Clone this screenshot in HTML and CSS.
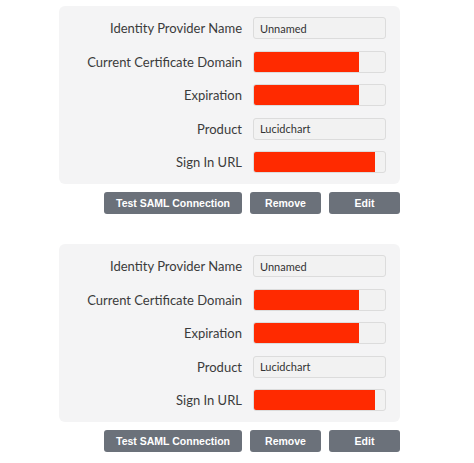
FILE: index.html
```html
<!DOCTYPE html>
<html>
<head>
<meta charset="utf-8">
<link rel="stylesheet" href="styles.css">
</head>
<body>
<div class="page">
  <section class="idp">
    <div class="panel">
      <div class="row"><span class="label">Identity Provider Name</span><div class="field"><span class="val">Unnamed</span></div></div>
      <div class="row"><span class="label">Current Certificate Domain</span><div class="field"><div class="redact" style="width:105px"></div></div></div>
      <div class="row"><span class="label">Expiration</span><div class="field"><div class="redact" style="width:105px"></div></div></div>
      <div class="row"><span class="label">Product</span><div class="field"><span class="val">Lucidchart</span></div></div>
      <div class="row"><span class="label">Sign In URL</span><div class="field"><div class="redact" style="width:121px"></div></div></div>
    </div>
    <div class="actions">
      <button class="btn btn-test">Test SAML Connection</button>
      <button class="btn btn-small">Remove</button>
      <button class="btn btn-small">Edit</button>
    </div>
  </section>
  <section class="idp">
    <div class="panel">
      <div class="row"><span class="label">Identity Provider Name</span><div class="field"><span class="val">Unnamed</span></div></div>
      <div class="row"><span class="label">Current Certificate Domain</span><div class="field"><div class="redact" style="width:105px"></div></div></div>
      <div class="row"><span class="label">Expiration</span><div class="field"><div class="redact" style="width:105px"></div></div></div>
      <div class="row"><span class="label">Product</span><div class="field"><span class="val">Lucidchart</span></div></div>
      <div class="row"><span class="label">Sign In URL</span><div class="field"><div class="redact" style="width:121px"></div></div></div>
    </div>
    <div class="actions">
      <button class="btn btn-test">Test SAML Connection</button>
      <button class="btn btn-small">Remove</button>
      <button class="btn btn-small">Edit</button>
    </div>
  </section>
</div>
</body>
</html>
```
FILE: styles.css
```css
html, body {
  margin: 0;
  padding: 0;
  background: #ffffff;
}
body {
  font-family: Lato, "Liberation Sans", sans-serif;
  color: #3a3a3a;
}
.page {
  width: 341px;
  margin-left: 59px;
  padding-top: 6px;
  display: flex;
  flex-direction: column;
  gap: 30px;
}
.idp {
  display: flex;
  flex-direction: column;
  gap: 8px;
}
.panel {
  background: #f4f4f5;
  border-radius: 6px;
  padding: 11px 14px 11px 0;
  display: flex;
  flex-direction: column;
  gap: 11.5px;
}
.row {
  display: flex;
  align-items: center;
  height: 22px;
}
.label {
  flex: 0 0 194px;
  text-align: right;
  font-size: 13px;
  color: #3b3b3b;
  padding-right: 11px;
  box-sizing: border-box;
  white-space: nowrap;
}
.field {
  flex: 0 0 133px;
  height: 22px;
  box-sizing: border-box;
  border: 1px solid #dcdcdc;
  border-radius: 3px;
  background: #f2f2f2;
  display: flex;
  align-items: center;
  overflow: hidden;
}
.val {
  font-size: 11px;
  padding-left: 6px;
  color: #333;
}
.redact {
  height: 20px;
  background: #ff2a00;
}
.actions {
  display: flex;
  justify-content: flex-end;
  gap: 8px;
}
.btn {
  height: 22px;
  border: none;
  border-radius: 3px;
  background: #6b717a;
  color: #ffffff;
  font-family: "Liberation Sans", Arial, sans-serif;
  font-weight: bold;
  font-size: 10.5px;
  padding: 0;
}
.btn-test { width: 138px; }
.btn-small { width: 71px; }
```
